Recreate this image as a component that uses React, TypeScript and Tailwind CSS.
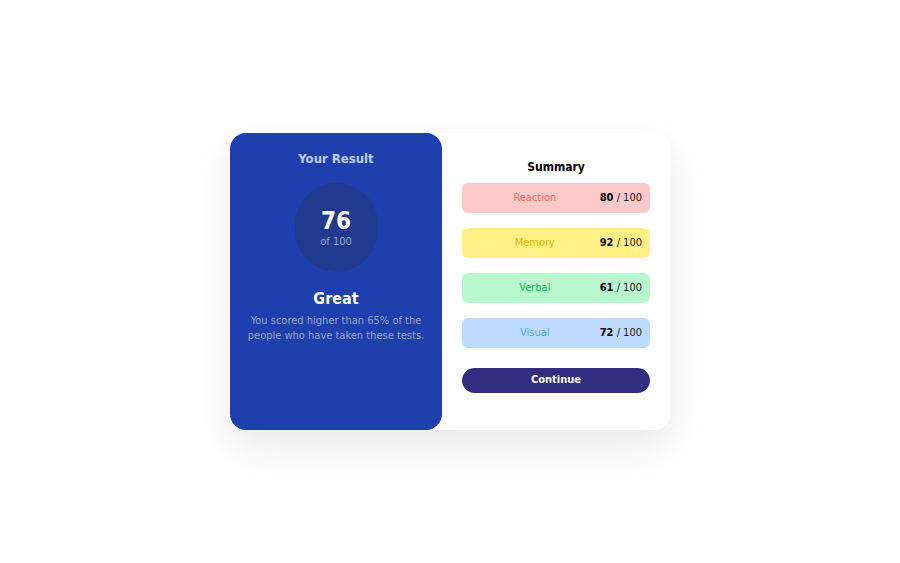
const scores = [
  { label: 'Reaction', value: 80, row: 'bg-red-200', text: 'text-red-400' },
  { label: 'Memory', value: 92, row: 'bg-yellow-200', text: 'text-yellow-500' },
  { label: 'Verbal', value: 61, row: 'bg-green-200', text: 'text-green-500' },
  { label: 'Visual', value: 72, row: 'bg-blue-200', text: 'text-blue-400' },
]

export default function App() {
  return (
    <div
      className="flex h-[563px] w-full items-center justify-center bg-white font-stretch-condensed"
      style={{ fontFamily: '"DejaVu Sans Condensed", "DejaVu Sans", sans-serif' }}
    >
      <div className="flex rounded-2xl shadow-[0_16px_40px_rgba(0,0,0,0.09)]">
        {/* result panel */}
        <div className="flex w-[212px] flex-col items-center rounded-2xl bg-[#1e40af] px-4 pt-[18px]">
          <h2 className="text-[13px] font-bold leading-4 text-[#c4cce6]">Your Result</h2>
          <div className="mt-[16px] flex h-[89px] w-[83px] flex-col items-center justify-center rounded-full bg-[#1f3a8e]">
            <span className="text-[24px] font-bold leading-7 text-white">76</span>
            <span className="text-[11px] leading-[14px] text-[#9aa6cf]">of 100</span>
          </div>
          <h3 className="mt-[17px] text-[16px] font-bold leading-5 text-white">Great</h3>
          <p className="mt-[4px] text-center text-[11px] leading-[15px] text-[#9aa3c4]">
            You scored higher than 65% of the people who have taken these tests.
          </p>
        </div>

        {/* summary panel */}
        <div className="flex w-[228px] flex-col rounded-2xl bg-white px-5 pt-[26px] pb-[37px]">
          <h2 className="text-center text-[12px] font-bold leading-4 text-black">Summary</h2>
          <div className="mt-[8px] flex flex-col gap-[15px]">
            {scores.map((s) => (
              <div key={s.label} className={`flex h-[30px] items-center rounded-md px-2 text-[11px] ${s.row}`}>
                <span className={`flex-1 text-center ${s.text}`}>{s.label}</span>
                <span className="text-[#1a1a1a]">
                  <b className="text-black">{s.value}</b> / 100
                </span>
              </div>
            ))}
          </div>
          <button className="mt-5 h-[25px] w-full rounded-full bg-[#312e81] text-[11px] font-bold text-white">
            Continue
          </button>
        </div>
      </div>
    </div>
  )
}
